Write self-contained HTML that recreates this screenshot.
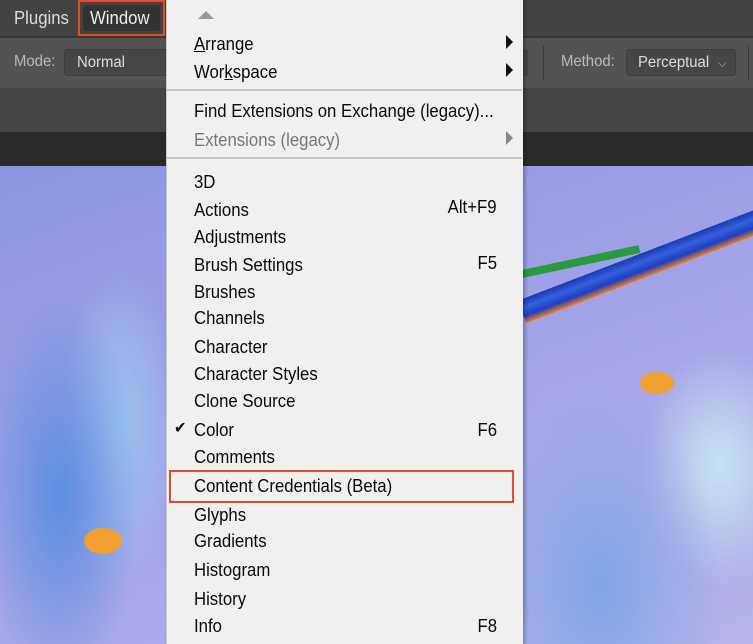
<!DOCTYPE html>
<html><head><meta charset="utf-8"><style>
*{margin:0;padding:0;box-sizing:border-box}
body{width:753px;height:644px;overflow:hidden;position:relative;font-family:"Liberation Sans",sans-serif;background:#9aa0e0}
.a{position:absolute}
.t{position:absolute;white-space:nowrap;font-size:18px;transform:scaleX(0.93);transform-origin:left center;line-height:22px}
.r{transform-origin:right center}
.m{color:#0a0a0a}
</style></head><body>
<div class="a" style="left:0;top:0;width:753px;height:36px;background:#434343"></div>
<div class="a" style="left:0;top:36px;width:753px;height:2px;background:#383838"></div>
<div class="a" style="left:0;top:38px;width:753px;height:50px;background:#535353"></div>
<div class="a" style="left:0;top:88px;width:753px;height:44px;background:#454545"></div>
<div class="a" style="left:0;top:132px;width:753px;height:34px;background:#2a2a2a"></div>
<div class="a" style="left:0;top:166px;width:753px;height:478px;background:
radial-gradient(ellipse 80px 200px at 60px 330px,#5b8fe0 0%,rgba(91,143,224,0) 100%),
radial-gradient(ellipse 60px 160px at 120px 260px,#9cc6f0 0%,rgba(156,198,240,0) 100%),
radial-gradient(ellipse 70px 60px at 110px 520px,#e0a040 0%,rgba(224,160,64,0) 70%),
radial-gradient(ellipse 120px 200px at 600px 420px,#7fa6e8 0%,rgba(127,166,232,0) 100%),
radial-gradient(ellipse 80px 120px at 720px 300px,#c7e4f2 0%,rgba(199,228,242,0) 100%),
linear-gradient(160deg,#8d95e2,#a7a6e8 60%,#b6b3ea)"></div>
<div class="a" style="left:522px;top:270px;width:120px;height:8px;background:#2a9a40;transform:rotate(-12deg);transform-origin:left center"></div>
<div class="a" style="left:522px;top:300px;width:260px;height:24px;background:linear-gradient(#1a3ab0,#3560e0,#2040c0 70%,#f08020);transform:rotate(-21deg);transform-origin:left center"></div>
<div class="a" style="left:640px;top:372px;width:34px;height:22px;border-radius:50%;background:#f0a030"></div>
<div class="a" style="left:84px;top:528px;width:38px;height:26px;border-radius:50%;background:#f0a030"></div>
<div class="t" style="left:14px;top:7px;color:#ddd;font-size:18px">Plugins</div>
<div class="a" style="left:78px;top:0;width:87px;height:36px;border:2px solid #e84a2a"></div>
<div class="a" style="left:83px;top:5px;width:77px;height:26px;background:#333;border-radius:3px"></div>
<div class="t" style="left:90px;top:7px;color:#eee">Window</div>
<div class="t" style="left:14px;top:51px;color:#bbb;font-size:16px">Mode:</div>
<div class="a" style="left:64px;top:49px;width:110px;height:27px;background:#464646;border:1px solid #3c3c3c;border-radius:3px"></div>
<div class="t" style="left:77px;top:52px;color:#ddd;font-size:16px">Normal</div>
<div class="a" style="left:522px;top:49px;width:6px;height:27px;background:#464646"></div>
<div class="a" style="left:543px;top:46px;width:1px;height:34px;background:#3a3a3a"></div>
<div class="t" style="left:561px;top:51px;color:#bbb;font-size:16px">Method:</div>
<div class="a" style="left:626px;top:49px;width:110px;height:27px;background:#464646;border:1px solid #3c3c3c;border-radius:3px"></div>
<div class="t" style="left:638px;top:52px;color:#ddd;font-size:16px">Perceptual</div>
<div class="t" style="left:718px;top:52px;color:#aaa;font-size:12px">⌵</div>
<div class="a" style="left:748px;top:46px;width:1px;height:34px;background:#3a3a3a"></div>
<div class="a" style="left:166px;top:0;width:357px;height:644px;background:#f0f0f0;border-left:1px solid #ccc;box-shadow:2px 0 4px rgba(0,0,0,.3)"></div>
<div class="a" style="left:198px;top:11px;width:0;height:0;border-left:8px solid transparent;border-right:8px solid transparent;border-bottom:8px solid #999"></div>
<div class="a" style="left:167px;top:89px;width:355px;height:2px;background:#c4c4c4"></div>
<div class="a" style="left:167px;top:157px;width:355px;height:2px;background:#c4c4c4"></div>
<div class="a" style="left:506px;top:35px;border-top:7px solid transparent;border-bottom:7px solid transparent;border-left:7px solid #111"></div>
<div class="a" style="left:506px;top:63px;border-top:7px solid transparent;border-bottom:7px solid transparent;border-left:7px solid #111"></div>
<div class="a" style="left:506px;top:131px;border-top:7px solid transparent;border-bottom:7px solid transparent;border-left:7px solid #888"></div>
<div class="t m" style="left:194px;top:33px"><u>A</u>rrange</div>
<div class="t m" style="left:194px;top:61px">Wor<u>k</u>space</div>
<div class="t m" style="left:194px;top:100px">Find Extensions on Exchange (legacy)...</div>
<div class="t" style="left:194px;top:129px;color:#777">Extensions (legacy)</div>
<div class="t m" style="left:194px;top:171px">3D</div>
<div class="t m" style="left:194px;top:199px">Actions</div>
<div class="t m r" style="right:256px;top:196px">Alt+F9</div>
<div class="t m" style="left:194px;top:226px">Adjustments</div>
<div class="t m" style="left:194px;top:254px">Brush Settings</div>
<div class="t m r" style="right:256px;top:252px">F5</div>
<div class="t m" style="left:194px;top:281px">Brushes</div>
<div class="t m" style="left:194px;top:307px">Channels</div>
<div class="t m" style="left:194px;top:336px">Character</div>
<div class="t m" style="left:194px;top:363px">Character Styles</div>
<div class="t m" style="left:194px;top:390px">Clone Source</div>
<div class="t m" style="left:174px;top:418px;font-size:16px">✔</div>
<div class="t m" style="left:194px;top:419px">Color</div>
<div class="t m r" style="right:256px;top:419px">F6</div>
<div class="t m" style="left:194px;top:446px">Comments</div>
<div class="a" style="left:169px;top:470px;width:345px;height:33px;border:2px solid #e84a2a"></div>
<div class="t m" style="left:194px;top:475px">Content Credentials (Beta)</div>
<div class="t m" style="left:194px;top:504px">Glyphs</div>
<div class="t m" style="left:194px;top:530px">Gradients</div>
<div class="t m" style="left:194px;top:559px">Histogram</div>
<div class="t m" style="left:194px;top:588px">History</div>
<div class="t m" style="left:194px;top:615px">Info</div>
<div class="t m r" style="right:256px;top:615px">F8</div>
</body></html>
